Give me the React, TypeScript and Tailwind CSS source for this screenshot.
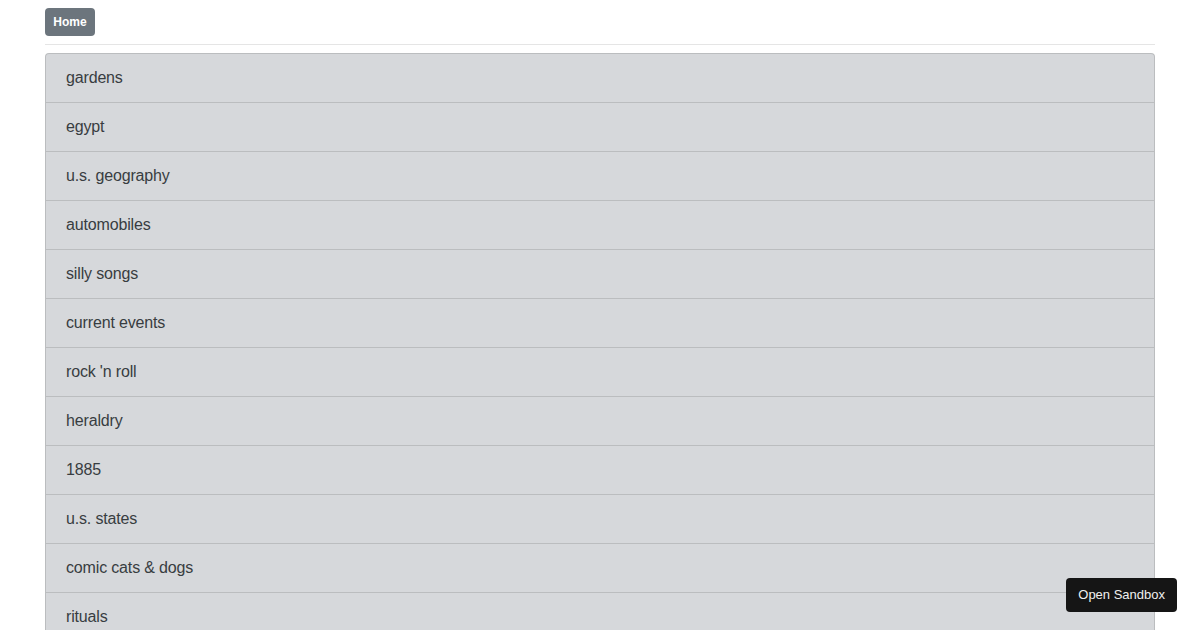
import React from "react";

const items = [
  "gardens",
  "egypt",
  "u.s. geography",
  "automobiles",
  "silly songs",
  "current events",
  "rock 'n roll",
  "heraldry",
  "1885",
  "u.s. states",
  "comic cats & dogs",
  "rituals",
  "potpourri",
  "science",
];

export default function App() {
  return (
    <div
      className="min-h-screen bg-white text-[#212529]"
      style={{ fontFamily: '"Liberation Sans", Arial, sans-serif' }}
    >
      <div className="mx-auto w-[1110px] pt-2">
        <button className="h-7 w-[50px] rounded bg-[#6c757d] text-xs font-bold text-white">
          Home
        </button>
        <div className="mt-2 mb-2 border-t border-[rgba(0,0,0,0.1)]" />
        <ul className="flex flex-col">
          {items.map((t, i) => (
            <li
              key={i}
              className={`border border-[rgba(0,0,0,0.125)] bg-[#d6d8db] px-5 py-3 text-base leading-6 tracking-[-0.01em] text-[#383d41] ${
                i === 0 ? "rounded-t" : "-mt-px"
              }`}
            >
              {t}
            </li>
          ))}
        </ul>
      </div>
      <div className="fixed right-[23px] bottom-[18px] flex h-[34px] items-center rounded bg-[#151515] px-3 text-[13px] text-[#f0f0f0]">
        Open Sandbox
      </div>
    </div>
  );
}
